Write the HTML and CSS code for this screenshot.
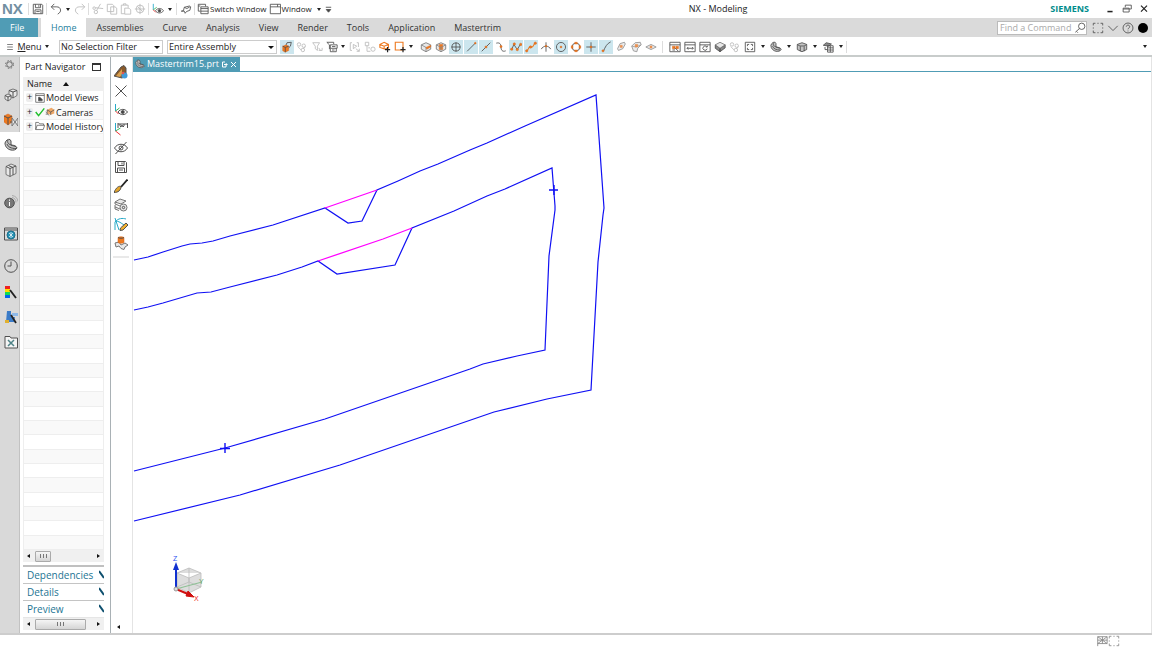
FILE: index.html
```html
<!DOCTYPE html>
<html lang="en">
<head>
<meta charset="utf-8">
<title>NX - Modeling</title>
<link rel="stylesheet" href="styles.css">
</head>
<body>
<svg class="sprite" aria-hidden="true">
  <symbol id="save" viewBox="0 0 14 14"><path d="M1.500 1.500h10l1 1V12.500h-11zM4 1.500v4h6v-4M3.500 12.500V8h7v4.500M8 2.500v2M5 10h4"/></symbol>
  <symbol id="undo" viewBox="0 0 14 14"><path d="M5 1 1.500 4.500 5 8M1.500 4.500H8a4 4 0 0 1 3 7L9 13"/></symbol>
  <symbol id="redo" viewBox="0 0 14 14"><path d="M9 1l3.500 3.500L9 8M12.500 4.500H6a4 4 0 0 0-3 7L5 13"/></symbol>
  <symbol id="cut" viewBox="0 0 14 14"><path d="M10 1 5.500 8.500M4 5.500l9 1"/><circle cx="4.500" cy="10.500" r="2"/><circle cx="2.500" cy="6" r="1.500"/></symbol>
  <symbol id="copy" viewBox="0 0 14 14"><path d="M1.500 1.500h6L9 3v7H1.500zM5.500 4.500h5L12.500 6v7h-7z"/></symbol>
  <symbol id="paste" viewBox="0 0 14 14"><path d="M1.500 2.500h8v3M1.500 2.500v10h4M4 2.500V1h3v1.500M5.500 6h5L12.500 8v5h-7z"/></symbol>
  <symbol id="move" viewBox="0 0 14 14"><circle cx="7" cy="7" r="4.500"/><path d="M7 1v12M1 7h12M4 4l6 6"/></symbol>
  <symbol id="axiseye" viewBox="0 0 14 14"><path class="cyan" d="M1.500 1v7"/><path class="green" d="M1.500 8l4-3"/><path class="red" d="M1.500 8l3 3"/><path d="M4 9c2.500-3.500 7-3.500 9.500 0-2.500 3.500-7 3.500-9.500 0z"/><circle class="ink" cx="8.700" cy="9" r="1.500"/></symbol>
  <symbol id="touch" viewBox="0 0 14 14"><path d="M1.500 9.500 4 9l1-4 6-1.500 1.500 1-1 4-4 1.500-1.500 2-1-2.500zM5 5l3 1.500 3.500-2"/></symbol>
  <symbol id="switch" viewBox="0 0 14 14"><path d="M10 4V1.500H1.500v8H4M1.500 3.500H4M4.500 4.500H13v8H4.500zM4.500 6.500H13M4.500 9.500H13"/></symbol>
  <symbol id="window" viewBox="0 0 14 14"><path d="M1.500 1.500h12v11h-12zM1.500 4.500h12M10 1.500v3"/></symbol>
  <symbol id="cubesel" viewBox="0 0 14 14"><path class="of" d="M2 6l4-1.500L9 6v5l-4 2-3-1.500z"/><path d="M2 6l3 1.500V13M5 7.500 9 6M6 4.500l1-2.500 5-.5L11 6 9 8"/></symbol>
  <symbol id="gears" viewBox="0 0 14 14"><circle cx="3.500" cy="4" r="2"/><circle cx="9" cy="5.500" r="2"/><circle cx="8" cy="10.500" r="2"/><path d="M2 6.500l4 4M11 7l-2 1.500"/></symbol>
  <symbol id="filter" viewBox="0 0 14 14"><path d="M2 2h8L7.500 6v5L5 9V6zM9 8l2 3M9 11h4V8"/></symbol>
  <symbol id="filterbox" viewBox="0 0 14 14"><path d="M1 1.500h8v2M1 1.500l3 3v5M5 4.500h8v4H5zM5 8.500v4h7v-4M7 6.500h4M7 10.500h3"/></symbol>
  <symbol id="bracket" viewBox="0 0 14 14"><path d="M3.500 2H1.500v9h2M9 2h2v5M5 4v5l4-3zM8 9l4 3M12 9v3H9"/></symbol>
  <symbol id="nodes" viewBox="0 0 14 14"><path d="M1.500 1.500h4v4h-4zM3.500 5.500V12h4M5 8h2"/><circle cx="10.500" cy="9.500" r="2.500"/></symbol>
  <symbol id="orbit" viewBox="0 0 14 14"><path class="ol" d="M1 4l5-2.500L11 4v4L7 9.500 1 7.500zM1 4l5 2 5-2M6 6v3"/><path class="bold" d="M10 7v6M7 10h6"/></symbol>
  <symbol id="boxplus" viewBox="0 0 14 14"><path class="ol" d="M1.500 1.500h9v9h-9z"/><path class="bold" d="M10.500 7v6M7.500 10h6"/></symbol>
  <symbol id="cubeo" viewBox="0 0 14 14"><path class="gf" d="M1.500 4.500 7 2l5.500 2.500v5L7 12.500l-5.500-3z"/><path class="soft" d="M1.500 4.500 7 7.500v5"/><path class="of" d="M7 7.500 12.500 5v2L8 9.500z"/></symbol>
  <symbol id="cubep" viewBox="0 0 14 14"><path class="gf" d="M1.500 4.500 7 2l5.500 2.500v5L7 12.500l-5.500-3z"/><path class="of" d="M5 4h4v6H5z"/><path class="soft" d="M1.500 4.500 7 7.500l5.500-3M7 7.500v5"/></symbol>
  <symbol id="target" viewBox="0 0 14 14"><circle cx="7" cy="7" r="4.700"/><path d="M7 1.500v11M1.500 7h11"/></symbol>
  <symbol id="line" viewBox="0 0 14 14"><path d="M2.500 12 12 2.500"/><circle class="of" cx="12" cy="2.500" r="1"/></symbol>
  <symbol id="midline" viewBox="0 0 14 14"><path d="M2 12 12 2"/><circle class="of" cx="7" cy="7" r="1.300"/></symbol>
  <symbol id="curve" viewBox="0 0 14 14"><path d="M1.500 2.500c4-1 5.500 1 5.500 4.500s1.500 6 5.500 4.500"/><circle class="of" cx="7" cy="6.500" r="1.300"/></symbol>
  <symbol id="zig" viewBox="0 0 14 14"><path d="M2 10l2.500-6 4 6 3.500-6"/><circle class="of" cx="2" cy="9.500" r="1.400"/><circle class="of" cx="5" cy="3.500" r="1.400"/><circle class="of" cx="8.500" cy="10" r="1.400"/><circle class="of" cx="12.500" cy="4" r="1.400"/></symbol>
  <symbol id="spline" viewBox="0 0 14 14"><path class="ol" d="M2 11c3 0 1-5 5-4s2-4 5-4"/><circle class="of" cx="2" cy="11.500" r="1.400"/><circle class="of" cx="6.500" cy="7" r="1.400"/><circle class="of" cx="12" cy="2.500" r="1.400"/></symbol>
  <symbol id="cross" viewBox="0 0 14 14"><path d="M7 1.500v11M1.500 9.500c2-4.500 9-4.500 11 0"/><circle class="of" cx="7" cy="6" r="1.100"/></symbol>
  <symbol id="circle" viewBox="0 0 14 14"><circle cx="7" cy="7" r="5.300"/><circle class="of" cx="7" cy="7" r="1.100"/></symbol>
  <symbol id="quad" viewBox="0 0 14 14"><circle cx="7" cy="7" r="4.500"/><path class="of" d="M5.500 1.500h3v2h-3zM5.500 10.500h3v2h-3zM1.500 5.500h2v3h-2zM10.500 5.500h2v3h-2z"/></symbol>
  <symbol id="plus" viewBox="0 0 14 14"><path d="M7 1.500v11M1.500 7h11"/><circle class="of" cx="7" cy="7" r="1.200"/></symbol>
  <symbol id="arc" viewBox="0 0 14 14"><path d="M12.500 1C8 3 6 7 4 12"/><circle class="of" cx="3.500" cy="11.500" r="1.300"/></symbol>
  <symbol id="face" viewBox="0 0 14 14"><path class="gf" d="M3 9l3-6 5-1.500 1 2L9 9l-5 2z"/><path class="of" d="M6 5h2.500v2.500H6z"/></symbol>
  <symbol id="facet" viewBox="0 0 14 14"><path class="gf" d="M2 6l4-4 6-.5 1 3-4 4-1 4-4-1z"/><path class="soft" d="M2 6l5 1 6-2.500"/><path class="of" d="M6 4h3v3H6z"/></symbol>
  <symbol id="faceflat" viewBox="0 0 14 14"><path class="gf" d="M1 7l6-3 6 3-6 3z"/><circle class="of" cx="7" cy="7" r="1.400"/></symbol>
  <symbol id="winedit" viewBox="0 0 14 14"><path class="of" d="M4 6h3v3H4zM8 6h3v3H8z"/><path d="M1 1.500h12v11H1zM1 4.500h12M7 8l4 4M4 10.500h3"/></symbol>
  <symbol id="winfit" viewBox="0 0 14 14"><path d="M1 1.500h12v11H1zM1 4.500h12M3.500 8.500h7M5 7 3.500 8.500 5 10M9.500 7 11 8.500 9.500 10"/></symbol>
  <symbol id="winrot" viewBox="0 0 14 14"><path d="M1 1.500h12v11H1zM1 4.500h12M9 6.700A2.500 2.500 0 1 0 9.500 9M9.700 5.500V7H8"/></symbol>
  <symbol id="plane" viewBox="0 0 14 14"><path class="gm" d="M1.500 4.500 7 8.500v4l-5.500-4zM7 8.500l6-4v3.500l-6 4.500z"/><path class="gf" d="M1.500 4.500 7 1.500l6 3-6 4z"/></symbol>
  <symbol id="frame" viewBox="0 0 14 14"><path d="M1.500 1.500h11v11h-11zM4 6V4h2M8 4h2v2M10 8v2H8M6 10H4V8"/></symbol>
  <symbol id="part" viewBox="0 0 14 14"><path class="gl" d="M1 5c1-3 3-4 5-3.500L7 3v4c3 0 6 1.500 6 3-1 2-4 2.500-6 2-3-.5-6-3-6-7z"/><path d="M4 2c-1 2 0 4 3 5M3 6c1 3 4 4.500 9 4.500M7 7c2 1 3 1 5 1.500"/></symbol>
  <symbol id="cyl" viewBox="0 0 14 14"><path class="gl" d="M1.500 4 7 2l5.500 2v6L7 12.500 1.500 10z"/><path d="M1.500 4c2 2.500 9 2.500 11 0M5 6v6M9.500 6v6"/></symbol>
  <symbol id="layers" viewBox="0 0 14 14"><path class="gm" d="M1.500 5 5 2l6 1.500L8 6z"/><path d="M6.500 5.500H13V13H6.500zM6.500 8H13M6.500 10.500H13M9.700 5.500V13M3.500 7v3h3"/></symbol>
  <symbol id="gear" viewBox="0 0 14 14"><circle cx="7" cy="7" r="3.500"/><circle class="dash" cx="7" cy="7" r="5"/></symbol>
  <symbol id="blocks" viewBox="0 0 14 14"><path class="gf" d="M1 7.500 4 6l3 1.500V11l-3 2-3-2zM5 5.500v-3L9 1l4 1.500v5L9 10 7 9V7.500z"/><path d="M1 7.500 4 9l3-1.500M4 9v4M5 2.500 9 4l4-1.500M9 4v6"/></symbol>
  <symbol id="assy" viewBox="0 0 14 14"><path class="of" d="M0 3l4-2 4 2v6l-4 3-4-3z"/><path d="M0 3l4 2 4-2M4 5v7M6 9h3"/><path class="gf" d="M8 5l6 8V5l-6 8z"/></symbol>
  <symbol id="book" viewBox="0 0 14 14"><path class="gf" d="M2 3.500l5-2.500 5 2v7.500l-6 3-4-2z"/><path d="M2 3.500l4 2v8M6 5.500 12 3M4.500 2.500l4.500 2v7.500"/></symbol>
  <symbol id="info" viewBox="0 0 14 14"><circle class="gd" cx="5.500" cy="8" r="4.800"/><path class="wl" d="M5.500 7v4M5.500 4.500v1.300"/><path class="faint" d="M8 2.500a5 5 0 0 1 4 5M8 .5a7 7 0 0 1 6 6"/></symbol>
  <symbol id="globe" viewBox="0 0 14 14"><path d="M.5 1h13v12H.5zM.5 3h13"/><circle class="blue" cx="7" cy="8" r="4"/><path class="wl thin" d="M5 6l4 4M9 6l-4 4M7 5v6"/></symbol>
  <symbol id="clock" viewBox="0 0 14 14"><circle cx="7" cy="7" r="6.300"/><path d="M7 2.500V7H3.500"/></symbol>
  <symbol id="rainbow" viewBox="0 0 14 14"><path fill="#e22" stroke="none" d="M1 1h5v3H1z"/><path fill="#fd0" stroke="none" d="M1 4h5v3H1z"/><path fill="#1d5" stroke="none" d="M1 7h5v3H1z"/><path fill="#06e" stroke="none" d="M1 10h5v3H1z"/><path class="thick" d="M6 5l6 8"/></symbol>
  <symbol id="machine" viewBox="0 0 14 14"><path fill="#3a7bc8" stroke="none" d="M3 1h4v6h4l-1 5H2z"/><path fill="#8db8e8" stroke="none" d="M8 3h6v3H8z"/><path fill="#e0b030" stroke="none" d="M1 10h4v3H1z"/><path class="thick" d="M7 5l5 8"/></symbol>
  <symbol id="tools" viewBox="0 0 14 14"><path class="pale" d="M1 1.500h5l1 1.500h6.500v10H1z"/><path class="tealline" d="M4 5l6 6M10 5l-6 6"/></symbol>
  <symbol id="sketch" viewBox="0 0 14 14"><path fill="#8a5a2a" d="M0 11l7-9 3-1.500L12 3v8l-4 2z"/><path fill="#d8a050" stroke="none" d="M2 11l6-7v5l-2 3z"/><circle fill="#3f9bd8" stroke="none" cx="10.500" cy="10.500" r="3"/><circle fill="#d55" stroke="none" cx="9" cy="8" r="1.300"/></symbol>
  <symbol id="x" viewBox="0 0 14 14"><path d="M1.500 1.500l11 11M12.500 1.500l-11 11"/></symbol>
  <symbol id="axisw" viewBox="0 0 14 14"><path class="cyan" d="M1.500 1v8"/><path class="green" d="M1.500 9l5-3"/><path class="red" d="M1.500 9l5 4"/><path d="M4 1v5M13.500 1v5M6 2v2l1 1 1-2 1 2 1-1V2M4 2h9"/></symbol>
  <symbol id="eyeoff" viewBox="0 0 14 14"><path d="M.5 7c3-5 10-5 13 0-3 5-10 5-13 0zM12.500 1l-11 12"/><circle cx="7" cy="7" r="2"/></symbol>
  <symbol id="brush" viewBox="0 0 14 14"><path class="thick" d="M13.500 0.500 7 8"/><path fill="#e3a52c" d="M7 7.500c-2-1-5 1-7 6 4 0 7-2 7-6z"/></symbol>
  <symbol id="stack" viewBox="0 0 14 14"><path class="gf" d="M1 4l5-3 6 2-5 3zM1 4v2l5 2M1 7v2l5 2M1 9v2l4 1.500"/><circle class="gf" cx="9.500" cy="9.500" r="3.500"/><circle cx="9.500" cy="9.500" r="1.200"/></symbol>
  <symbol id="sketchpen" viewBox="0 0 14 14"><path class="cyan" d="M1 13V5c3-4 8-4 11-3M1 4c4 0 6 2 9 4M1 1l4 12"/><path fill="#f0b030" d="M12 6l2 2-5 5-3 .5.500-2.500z"/></symbol>
  <symbol id="joint" viewBox="0 0 14 14"><path class="gf" d="M1 7l4-1 2 3 4-2 3 2-3 2-1 2.500-3-1L5 10l-3 1z"/><path class="of" d="M4 1.500c1-1 5-1 6 0v5c-1 1-5 1-6 0z"/><path d="M4 1.500c1 1 5 1 6 0"/></symbol>
  <symbol id="folder" viewBox="0 0 14 14"><path d="M1 12V2h4l1.500 2H12v2M1 12l2-6h10.500l-2 6z"/></symbol>
  <symbol id="camera" viewBox="0 0 14 14"><path fill="#efa868" stroke="none" d="M3 4l6-3 4 3v5l-5 2-5-2z"/><path d="M3 4l5 3v4M8 7l5-3M1 7l5 5M1 10h3M3 4v4"/></symbol>
  <symbol id="views" viewBox="0 0 14 14"><path d="M1 1h12v12H1zM1 3.500h12"/><path class="ink" d="M5 6h2l3 3v2H5z"/></symbol>
  <symbol id="corners" viewBox="0 0 14 14"><path d="M1.500 4V1.500H4M10 1.500h2.500V4M12.500 10v2.500H10M4 12.500H1.500V10M6.300 1.500h1.400M6.300 12.500h1.400M1.500 6.300v1.400M12.500 6.300v1.400"/></symbol>
  <symbol id="key" viewBox="0 0 14 14"><circle cx="9" cy="5" r="3.700"/><path d="M6.500 7.500 1.500 12M3 11l1.500 1.500"/></symbol>
  <symbol id="chev" viewBox="0 0 14 14"><path d="M1.500 4.500 7 10l5.500-5.500"/></symbol>
  <symbol id="help" viewBox="0 0 14 14"><circle cx="7" cy="7" r="5.800"/><path d="M5 5.500c0-2.500 4-2.500 4 0 0 1.500-2 1.500-2 3M7 10v1"/></symbol>
  <symbol id="grid" viewBox="0 0 14 14"><path d="M2 13V2h11v8H2M2 2l11 8M13 2 2 10M7.500 2v8M2 6h11"/></symbol>
  <symbol id="pop" viewBox="0 0 14 14"><path d="M8 2H3v10h7V9M6 7h6M10 4.500 12.500 7 10 9.500"/></symbol>
</svg>

<div class="app">
  <header class="titlebar">
    <div class="quick">
      <span class="logo">NX</span><i class="sep"></i>
      <button aria-label="Save"><svg><use href="#save"/></svg></button><i class="sep"></i>
      <button aria-label="Undo"><svg><use href="#undo"/></svg></button><button class="drop" aria-label="Undo list"></button>
      <button class="off" aria-label="Redo"><svg><use href="#redo"/></svg></button><i class="sep"></i>
      <button class="off" aria-label="Cut"><svg><use href="#cut"/></svg></button>
      <button class="off" aria-label="Copy"><svg><use href="#copy"/></svg></button>
      <button class="off" aria-label="Paste"><svg><use href="#paste"/></svg></button>
      <button class="off" aria-label="Move"><svg><use href="#move"/></svg></button><i class="sep"></i>
      <button aria-label="Show"><svg><use href="#axiseye"/></svg></button><button class="drop" aria-label="Show options"></button><i class="sep"></i>
      <button aria-label="Touch mode"><svg><use href="#touch"/></svg></button><i class="sep"></i>
      <button class="labelled"><svg><use href="#switch"/></svg>Switch Window</button>
      <button class="labelled"><svg><use href="#window"/></svg>Window</button><button class="drop" aria-label="Window list"></button>
      <button class="more" aria-label="Toolbar options"><svg viewBox="0 0 10 10"><path d="M2 2.500h6"/><path class="ink" d="M2.500 5h5L5 8z"/></svg></button>
    </div>
    <h1>NX - Modeling</h1>
    <div class="winctl">
      <strong>SIEMENS</strong>
      <button aria-label="Minimize"><svg viewBox="0 0 14 14"><path class="thick" d="M4 10h6"/></svg></button>
      <button aria-label="Restore"><svg viewBox="0 0 14 14"><path d="M5 5V2.500h7V7H9.500M2.500 6h7v4.500h-7zM2.500 7h7"/></svg></button>
      <button aria-label="Close"><svg viewBox="0 0 14 14"><path class="bold" d="M3.500 3l7 7M10.500 3l-7 7"/></svg></button>
    </div>
  </header>

  <nav class="ribbon">
    <a class="file" href="#file">File</a><a class="current" href="#home">Home</a><a href="#assemblies">Assemblies</a><a href="#curve-tab">Curve</a><a href="#analysis">Analysis</a><a href="#view">View</a><a href="#render">Render</a><a href="#tools-tab">Tools</a><a href="#application">Application</a><a href="#mastertrim">Mastertrim</a>
    <div class="finder">
      <label class="search"><input type="text" placeholder="Find a Command" aria-label="Find a Command"><svg><use href="#key"/></svg></label>
      <button aria-label="Full screen"><svg><use href="#corners"/></svg></button>
      <button aria-label="Minimize ribbon"><svg><use href="#chev"/></svg></button>
      <button aria-label="Help"><svg><use href="#help"/></svg></button>
      <button aria-label="Account"><span class="dot"></span></button>
    </div>
  </nav>

  <div class="toolbar">
    <button class="menu"><svg viewBox="0 0 14 14"><path d="M3 3.500h8M3 7h8M3 10.500h8"/></svg><span><u>M</u>enu</span><i class="caret"></i></button>
    <span class="select filter"><select aria-label="Selection filter"><option>No Selection Filter</option></select></span>
    <span class="select scope"><select aria-label="Selection scope"><option>Entire Assembly</option></select></span>
    <div class="icons">
      <button class="on" aria-label="Select solid"><svg><use href="#cubesel"/></svg></button>
      <button class="off" aria-label="Select components"><svg><use href="#gears"/></svg></button>
      <button class="off" aria-label="Reset filter"><svg><use href="#filter"/></svg></button>
      <button aria-label="Filter settings"><svg><use href="#filterbox"/></svg></button><button class="drop" aria-label="Filter list"></button>
      <button class="off" aria-label="Deselect"><svg><use href="#bracket"/></svg></button>
      <button class="off" aria-label="Select chain"><svg><use href="#nodes"/></svg></button>
      <button aria-label="Rotate point"><svg><use href="#orbit"/></svg></button>
      <button aria-label="Rectangle select"><svg><use href="#boxplus"/></svg></button><button class="drop" aria-label="Select shape"></button>
      <button class="gap" aria-label="Highlight face"><svg><use href="#cubeo"/></svg></button>
      <button aria-label="Highlight hidden"><svg><use href="#cubep"/></svg></button>
      <button class="on" aria-label="Snap point"><svg><use href="#target"/></svg></button>
      <button class="on" aria-label="End point"><svg><use href="#line"/></svg></button>
      <button class="on" aria-label="Mid point"><svg><use href="#midline"/></svg></button>
      <button aria-label="Control point"><svg><use href="#curve"/></svg></button>
      <button class="on" aria-label="Pole"><svg><use href="#zig"/></svg></button>
      <button class="on" aria-label="Defining point"><svg><use href="#spline"/></svg></button>
      <button aria-label="Intersection"><svg><use href="#cross"/></svg></button>
      <button class="on" aria-label="Arc center"><svg><use href="#circle"/></svg></button>
      <button aria-label="Quadrant point"><svg><use href="#quad"/></svg></button>
      <button class="on" aria-label="Existing point"><svg><use href="#plus"/></svg></button>
      <button class="on" aria-label="Point on curve"><svg><use href="#arc"/></svg></button>
      <button class="faded" aria-label="Point on face"><svg><use href="#face"/></svg></button>
      <button class="faded" aria-label="Point on facet"><svg><use href="#facet"/></svg></button>
      <button class="faded" aria-label="Bounded grid"><svg><use href="#faceflat"/></svg></button>
    </div>
    <i class="sep wide"></i>
    <div class="icons views">
      <button aria-label="Edit window"><svg><use href="#winedit"/></svg></button>
      <button aria-label="Fit"><svg><use href="#winfit"/></svg></button>
      <button aria-label="Rotate view"><svg><use href="#winrot"/></svg></button>
      <button aria-label="Section"><svg><use href="#plane"/></svg></button>
      <button class="off" aria-label="Link"><svg><use href="#gears"/></svg></button>
      <button aria-label="Zoom frame"><svg><use href="#frame"/></svg></button><button class="drop" aria-label="Zoom list"></button>
      <button aria-label="Render style"><svg><use href="#part"/></svg></button><button class="drop" aria-label="Render list"></button>
      <button aria-label="Orientation"><svg><use href="#cyl"/></svg></button><button class="drop" aria-label="Orientation list"></button>
      <button aria-label="Layers"><svg><use href="#layers"/></svg></button><button class="drop" aria-label="Layer list"></button>
    </div>
    <i class="sep"></i>
    <button class="drop last" aria-label="More"></button>
  </div>

  <main class="body">
    <nav class="rail" aria-label="Resource bar">
      <button class="small" aria-label="Settings"><svg><use href="#gear"/></svg></button>
      <button class="first" aria-label="Assembly navigator"><svg><use href="#blocks"/></svg></button>
      <button aria-label="Constraint navigator"><svg><use href="#assy"/></svg></button>
      <button class="active" aria-label="Part navigator"><svg><use href="#part"/></svg></button>
      <button aria-label="Reuse library"><svg><use href="#book"/></svg></button>
      <button class="apart" aria-label="Information"><svg><use href="#info"/></svg></button>
      <button class="apart" aria-label="Web browser"><svg><use href="#globe"/></svg></button>
      <button class="apart" aria-label="History"><svg><use href="#clock"/></svg></button>
      <button class="next" aria-label="System materials"><svg><use href="#rainbow"/></svg></button>
      <button aria-label="Process studio"><svg><use href="#machine"/></svg></button>
      <button aria-label="Roles"><svg><use href="#tools"/></svg></button>
    </nav>

    <aside class="panel">
      <div class="panelhead"><h2>Part Navigator</h2><button aria-label="Maximize panel"><span class="pane"></span></button></div>
      <div class="colhead">Name <i class="up"></i></div>
      <ul class="tree">
        <li><i class="exp">+</i><svg><use href="#views"/></svg>Model Views</li>
        <li><i class="exp">+</i><svg viewBox="0 0 14 14"><path class="tick" d="M1 7l4 5 8-10"/></svg><svg><use href="#camera"/></svg>Cameras</li>
        <li><i class="exp">+</i><svg><use href="#folder"/></svg>Model History</li>
        <li></li><li></li><li></li><li></li><li></li><li></li><li></li><li></li><li></li><li></li><li></li><li></li><li></li><li></li><li></li><li></li><li></li><li></li><li></li><li></li><li></li><li></li><li></li><li></li><li></li><li></li><li></li><li></li><li></li>
      </ul>
      <div class="scroll"><i class="left"></i><b class="thumb"></b><i class="right"></i></div>
      <div class="sections">
        <button>Dependencies<svg viewBox="0 0 5 10"><path d="M0 1l5 7"/></svg></button>
        <button>Details<svg viewBox="0 0 5 10"><path d="M0 1l5 7"/></svg></button>
        <button>Preview<svg viewBox="0 0 5 10"><path d="M0 1l5 7"/></svg></button>
      </div>
      <div class="scroll long"><i class="left"></i><b class="thumb"></b><i class="right"></i></div>
    </aside>

    <div class="sidebar">
      <button aria-label="Sketch"><svg><use href="#sketch"/></svg></button>
      <button aria-label="Delete"><svg><use href="#x"/></svg></button>
      <button aria-label="Show datum"><svg><use href="#axiseye"/></svg></button>
      <button aria-label="WCS"><svg><use href="#axisw"/></svg></button>
      <button aria-label="Hide"><svg><use href="#eyeoff"/></svg></button>
      <button aria-label="Save part"><svg><use href="#save"/></svg></button>
      <button aria-label="Edit display"><svg><use href="#brush"/></svg></button>
      <button aria-label="Layer settings"><svg><use href="#stack"/></svg></button>
      <button aria-label="Edit sketch"><svg><use href="#sketchpen"/></svg></button>
      <button aria-label="Joint"><svg><use href="#joint"/></svg></button>
      <i class="rule"></i>
      <button class="collapse" aria-label="Collapse"><i class="left"></i></button>
    </div>

    <section class="work">
      <div class="tabs"><div class="tab"><svg><use href="#part"/></svg><span>Mastertrim15.prt</span><svg class="mini"><use href="#pop"/></svg><button aria-label="Close Mastertrim15.prt"><svg class="mini" viewBox="0 0 14 14"><path d="M2 2l10 10M12 2 2 12"/></svg></button></div></div>
      <svg class="canvas" role="img" aria-label="Trim profile curves">
        <g transform="translate(-133 -72)">
          <g class="edge">
            <path d="M134 260l14-3 15-5 19-6 8-2 12-1 11-2 17-5 43-11 52-17 23 15 14-2 15-31 21-9 22-10 18-7 32-14 17-7 38-17 71-31 8 113-1 7-5 47-7 128-44 9-53 13-154 53-100 30-106 26"/>
            <path d="M134 310l14-3 15-4 34-10 14-1 19-5 47-12 25-8 16-6 19 13 58-9 17-37 42-17 33-15 18-7 47-21 3 38v4l-6 46-4 94-28 6-34 8-13 5-145 50-100 29-91 23"/>
            <path class="mark" d="M549 190h9M554 185v10M220 448.500h10M225 443v10"/>
          </g>
          <path class="trim" d="M325 208l52-18M318 261l65-22 29-11"/>
          <g class="triad">
            <path class="box" d="M177 573l12-5 12 5v14l-12 6-12-6zM177 573l12 5 12-5M189 578v15M177 587l12-5 12 5M189 568v14"/>
            <path class="ya" d="M176 589l26-7"/>
            <path class="za" d="M176 589v-20"/><path class="zh" d="M173 570l3-8 3 8z"/>
            <path class="xa" d="M176 589l12 5"/><path class="xh" d="M188 591l6 6-8-1z"/>
            <circle cx="176" cy="589" r="2"/>
            <text class="zt" x="173" y="561">Z</text><text class="xt" x="194" y="601">X</text><text class="yt" x="199" y="584">Y</text>
          </g>
        </g>
      </svg>
    </section>
  </main>

  <footer class="status"><svg><use href="#grid"/></svg><svg><use href="#corners"/></svg></footer>
</div>
</body>
</html>
```
FILE: styles.css
```css
* { box-sizing: border-box; }
body { margin: 0; background: #fff; color: #222; font: 9px/14px "Open Sans", "Noto Sans", sans-serif; }
button { border: 0; padding: 0; margin: 0; background: none; color: inherit; font: inherit; display: inline-flex; align-items: center; justify-content: center; flex: none; }
svg { width: 12px; height: 12px; flex: none; fill: none; stroke: #505050; stroke-width: 1; }
.sprite { position: absolute; width: 0; height: 0; }
i { font-style: normal; flex: none; }
h1, h2 { margin: 0; font: inherit; }

.thick { stroke: #222; stroke-width: 1.8; }
.bold { stroke: #222; stroke-width: 1.4; }
.thin { stroke-width: 0.7; }
.soft { stroke: #888; }
.of { fill: #ee7a20; stroke: #d4631a; stroke-width: 0.5; }
.ol { stroke: #ee7a20; stroke-width: 1.3; }
.gf { fill: #e8e8e8; stroke: #777; }
.gl { fill: #c4c4c4; }
.gm { fill: #8a8a8a; }
.gd { fill: #777; }
.ink { fill: #444; }
.pale { fill: #f4f4f4; }
.wl { stroke: #fff; }
.faint { stroke: #aaa; }
.blue { fill: #2793b5; stroke: #1b6f8c; }
.cyan { stroke: #27aac8; }
.green { stroke: #3cb55a; }
.red { stroke: #e33; }
.tealline { stroke: #4d8286; stroke-width: 1.5; }
.tick { stroke: #1fc02c; stroke-width: 2; }
.dash { stroke-dasharray: 2 2; }
.off svg { stroke: #bbb; }
.faded svg { opacity: 0.8; }

.app { display: flex; flex-direction: column; min-height: 100vh; }

.titlebar { display: grid; grid-template-columns: minmax(0, 63fr) auto minmax(0, 37fr); align-items: center; height: 18px; }
.quick { display: flex; align-items: center; }
.quick button { width: 14px; height: 16px; }
.quick .sep { margin: 0 2px 0 1px; }
.quick .labelled { width: auto; gap: 1px; margin-right: 2px; font-size: 8px; }
.quick .drop, .drop, .quick .more { width: 10px; height: 14px; }
.more svg { width: 9px; height: 9px; }
.logo { width: 27px; padding-left: 2px; color: #728fa1; font: bold 15px/16px "Liberation Sans", sans-serif; }
.sep { width: 1px; height: 12px; background: #ddd; }
.drop::after, .caret { content: ""; border: 2px solid transparent; border-top: 3px solid #222; border-bottom: 0; }
.winctl { display: flex; align-items: center; justify-content: flex-end; }
.winctl strong { color: #008c8c; margin-right: 12px; }
.winctl button { width: 17px; height: 14px; }

.ribbon { display: flex; height: 19px; background: #dadada; align-items: stretch; }
.ribbon > a { padding: 0 9px 0 10px; color: #333; text-decoration: none; line-height: 20px; }
.ribbon .file { width: 38px; margin-right: 3px; background: #509cb5; color: #fff; }
.ribbon .current { padding-right: 10px; background: #fff; color: #23809c; }
.finder { display: flex; align-items: center; gap: 1px; margin-left: auto; padding-right: 2px; }
.finder button { width: 14px; height: 14px; }
.search { display: flex; align-items: center; width: 90px; height: 14px; margin-right: 3px; border: 1px solid #bbb; background: #fff; }
.search input { width: 76px; border: 0; padding: 0 0 0 2px; background: none; font: inherit; line-height: 12px; height: 12px; }
.search input::placeholder { color: #aaa; opacity: 1; }
.dot { width: 10px; height: 10px; border-radius: 50%; background: #000; }

.toolbar { display: flex; align-items: center; height: 20px; padding-top: 1px; border-bottom: 2px solid #c8cccb; }
.menu { gap: 2px; width: 54px; height: 14px; margin-right: 5px; }
.menu svg { width: 10px; }
.menu .caret { margin-left: 1px; }
.select { position: relative; height: 14px; }
.select::after { content: ""; position: absolute; right: 3px; top: 6px; border: 3px solid transparent; border-top-color: #111; border-bottom: 0; pointer-events: none; }
.select select { appearance: none; display: block; width: 100%; height: 14px; padding: 0 0 0 1px; border: 1px solid #ccc; border-radius: 0; background: #fff; color: #222; font: inherit; line-height: 12px; }
.filter { width: 104px; margin-right: 4px; }
.scope { width: 110px; margin-right: 3px; }
.icons { display: flex; align-items: center; gap: 1px; }
.icons button { width: 14px; height: 14px; }
.icons .drop { width: 10px; margin: 0 -1px 0 -2px; }
.views .drop { margin: 0; }
.icons .on { background: #cce6ee; }
.icons .gap { margin-left: 3px; }
.wide { margin: 0 5px 0 4px; }
.last { margin-left: auto; margin-right: 2px; }

.body { display: flex; flex: 1; min-height: 0; border-bottom: 2px solid #cdcdcd; }
.rail { display: flex; flex-direction: column; width: 20px; background: #d9d9d9; border-right: 1px solid #c2c2c2; flex: none; }
.rail button { width: 20px; height: 25px; padding-left: 1px; }
.rail svg, .sidebar svg { width: 14px; height: 14px; }
.rail .small { height: 14px; padding-right: 3px; }
.rail .small svg { width: 11px; height: 11px; }
.rail .first { margin-top: 11px; }
.rail .apart { margin-top: 7px; }
.rail .next { margin-top: 1px; }
.rail .active { background: #fff; }

.panel { display: flex; flex-direction: column; width: 91px; padding: 0 6px 3px 3px; border-right: 1px solid #a9b1b5; flex: none; }
.panelhead { display: flex; align-items: center; justify-content: space-between; height: 20px; padding: 0 3px 0 2px; white-space: nowrap; }
.pane { width: 9px; height: 8px; border: 1px solid #333; border-top-width: 2px; }
.colhead { display: flex; align-items: center; gap: 11px; height: 14px; padding-left: 4px; background: #efefef; }
.up { border: 3px solid transparent; border-bottom: 4px solid #111; border-top: 0; }
.tree { display: grid; grid-auto-rows: 1fr; flex: 1; margin: 0; padding: 0; list-style: none; overflow: hidden; border: solid #eee; border-width: 0 1px; }
.tree li { display: flex; align-items: center; gap: 1px; min-height: 14px; padding-left: 2px; line-height: 13px; white-space: nowrap; border-bottom: 1px solid #eee; }
.tree li:nth-child(even) { background: #f9f9f9; }
.tree svg { width: 10px; height: 10px; }
.tree svg + svg { margin-left: -1px; }
.exp { width: 7px; height: 9px; margin-right: 1px; border-radius: 2px; background: #ededed; line-height: 8px; text-align: center; }
.scroll { display: flex; align-items: center; height: 12px; padding: 0 4px; background: #f0f0f0; gap: 5px; }
.left { border: 2px solid transparent; border-right: 3px solid #111; border-left: 0; }
.right { margin-left: auto; border: 2px solid transparent; border-left: 3px solid #111; border-right: 0; }
.thumb { width: 16px; height: 11px; border: 1px solid #aaa; border-radius: 1px; background: repeating-linear-gradient(90deg, #777 0 1px, transparent 1px 3px) center / 7px 4px no-repeat, linear-gradient(#f5f5f5, #d5d5d5); }
.long .thumb { width: 51px; }
.sections { margin-top: 3px; border-top: 2px solid #c0c0c0; }
.sections button { display: flex; justify-content: space-between; width: 100%; height: 17px; padding-left: 4px; border-bottom: 1px solid #c4c4c4; color: #1d7594; font-size: 10px; line-height: 16px; }
.sections button:last-child { border-bottom-color: #e6e6e6; }
.sections svg { width: 5px; height: 10px; stroke: #0d4f6e; stroke-width: 2; }

.sidebar { display: flex; flex-direction: column; align-items: center; width: 21px; padding: 5px 1px 0 0; flex: none; }
.sidebar button { width: 20px; height: 19px; }
.rule { width: 16px; height: 2px; margin-top: 4px; background: #e9e9e9; }
.sidebar .collapse { margin-top: auto; height: 12px; padding-right: 6px; }

.work { display: flex; flex-direction: column; flex: 1; min-width: 0; border: solid #e4e4e4; border-width: 0 1px; }
.tabs { display: flex; border-bottom: 1px solid #509cb5; }
.tab { display: flex; align-items: center; gap: 2px; height: 14px; padding: 0 3px 0 2px; background: #509cb5; color: #fff; }
.tab svg { width: 10px; height: 10px; }
.tab .mini { width: 7px; height: 7px; stroke: #fff; stroke-width: 2; }
.canvas { display: block; width: 100%; flex: 1; }
.edge { stroke: #1010f4; stroke-width: 1.2; }
.mark { stroke-width: 1.4; }
.trim { stroke: #f0f; stroke-width: 1.3; }
.triad { font: 7px "Liberation Sans", sans-serif; }
.triad .box { fill: #ddd; stroke: #bbb; stroke-width: 0.8; }
.triad circle { fill: #ddd; stroke: #999; }
.za { stroke: #1030d0; stroke-width: 2; }
.zh { fill: #1030d0; stroke: none; }
.xa { stroke: #d01010; stroke-width: 2; }
.xh { fill: #d01010; stroke: #d01010; }
.ya { stroke: #8fc096; stroke-width: 1.2; }
.triad text { stroke: none; }
.zt { fill: #2a50f0; }
.xt { fill: #e22; }
.yt { fill: #6aa872; }

.status { display: flex; justify-content: flex-end; align-items: center; height: 12px; padding-right: 32px; }
.status svg { stroke: #888; }
```
